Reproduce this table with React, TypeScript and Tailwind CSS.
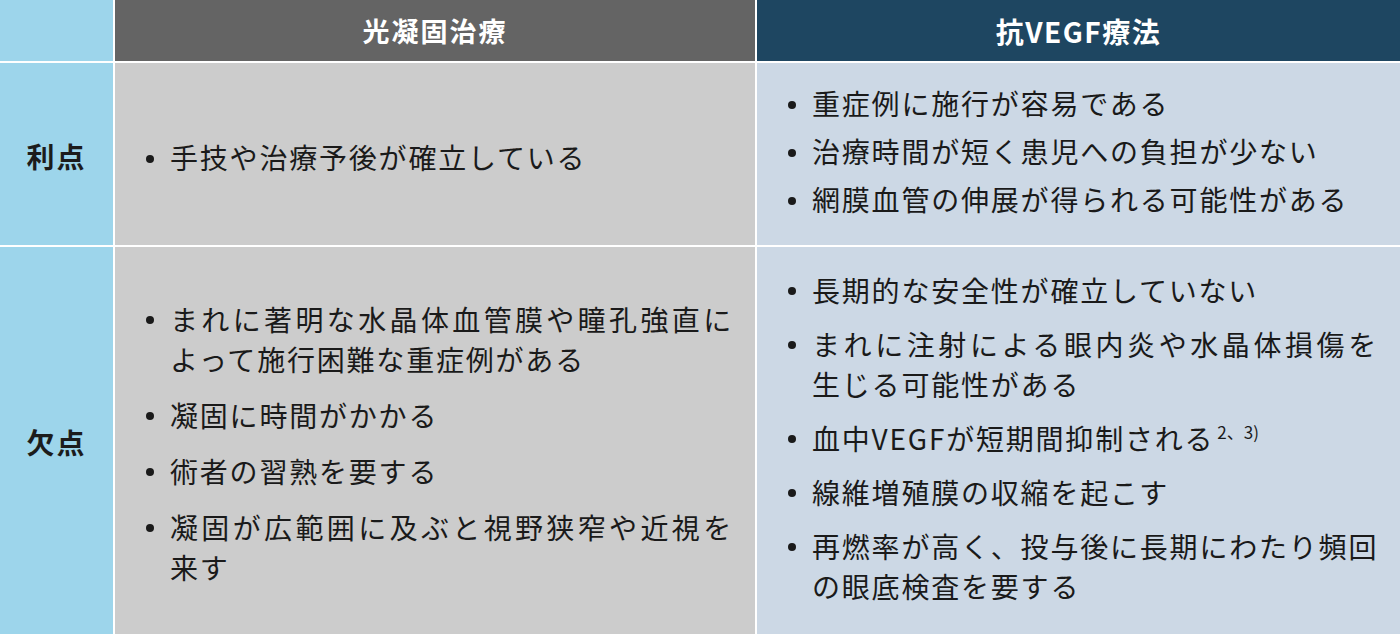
import React from "react";

type Item = { lines: React.ReactNode[] };

const FONT = { fontFamily: '"Noto Sans CJK JP", "Noto Sans", sans-serif' };

function Bullets({ items, gap }: { items: Item[]; gap: string }) {
  return (
    <div className={`flex flex-col ${gap}`}>
      {items.map((it, i) => (
        <div key={i} className="flex">
          <div className="w-[23px] shrink-0 h-[40px] flex items-center">
            <div className="w-[8px] h-[8px] rounded-full bg-[#1a1a1a] mt-[3px] -ml-[1px]" />
          </div>
          <div className="flex-1 flex flex-col">
            {it.lines.map((l, j) => (
              <div
                key={j}
                className={
                  j < it.lines.length - 1
                    ? "h-[40px] text-justify [text-align-last:justify] whitespace-nowrap"
                    : "h-[40px] whitespace-nowrap"
                }
              >
                {l}
              </div>
            ))}
          </div>
        </div>
      ))}
    </div>
  );
}

export default function App() {
  const r1c2: Item[] = [{ lines: ["手技や治療予後が確立している"] }];
  const r1c3: Item[] = [
    { lines: ["重症例に施行が容易である"] },
    { lines: ["治療時間が短く患児への負担が少ない"] },
    { lines: ["網膜血管の伸展が得られる可能性がある"] },
  ];
  const r2c2: Item[] = [
    { lines: ["まれに著明な水晶体血管膜や瞳孔強直に", "よって施行困難な重症例がある"] },
    { lines: ["凝固に時間がかかる"] },
    { lines: ["術者の習熟を要する"] },
    { lines: ["凝固が広範囲に及ぶと視野狭窄や近視を", "来す"] },
  ];
  const r2c3: Item[] = [
    { lines: ["長期的な安全性が確立していない"] },
    { lines: ["まれに注射による眼内炎や水晶体損傷を", "生じる可能性がある"] },
    {
      lines: [
        <span key="s">
          血中VEGFが短期間抑制される
          <span className="text-[17px] leading-none tracking-normal relative top-[-11px] ml-[3px]">2、3)</span>
        </span>,
      ],
    },
    { lines: ["線維増殖膜の収縮を起こす"] },
    { lines: ["再燃率が高く、投与後に長期にわたり頻回", "の眼底検査を要する"] },
  ];

  const body =
    "text-[28px] leading-[40px] tracking-[1.8px] font-normal text-[#1a1a1a] flex flex-col justify-center pl-[32px] pr-[22px]";

  return (
    <div
      style={FONT}
      className="w-[1400px] h-[634px] bg-white grid grid-cols-[113px_640px_643px] grid-rows-[61px_182px_387px] gap-[2px]"
    >
      <div className="bg-[#9dd5eb]" />
      <div className="bg-[#646464] text-white font-bold text-[27px] tracking-[2px] flex items-center justify-center pt-[1px]">
        光凝固治療
      </div>
      <div className="bg-[#1e4661] text-white font-bold text-[28px] tracking-[1.5px] flex items-center justify-center pt-[1px]">
        抗VEGF療法
      </div>

      <div className="bg-[#9dd5eb] flex items-center justify-center font-bold text-[28px] tracking-[2px] text-[#1c1c1c] pt-[4px]">
        利点
      </div>
      <div className={`bg-[#cccccc] ${body} pt-[6px]`}>
        <Bullets items={r1c2} gap="gap-[8px]" />
      </div>
      <div className={`bg-[#ccd8e5] ${body} pb-[6px]`}>
        <Bullets items={r1c3} gap="gap-[8px]" />
      </div>

      <div className="bg-[#9dd5eb] flex items-center justify-center font-bold text-[28px] tracking-[2px] text-[#1c1c1c] pt-[2px]">
        欠点
      </div>
      <div className={`bg-[#cccccc] ${body} pt-[4px]`}>
        <Bullets items={r2c2} gap="gap-[16px]" />
      </div>
      <div className={`bg-[#ccd8e5] ${body} pb-[6px]`}>
        <Bullets items={r2c3} gap="gap-[14px]" />
      </div>
    </div>
  );
}
